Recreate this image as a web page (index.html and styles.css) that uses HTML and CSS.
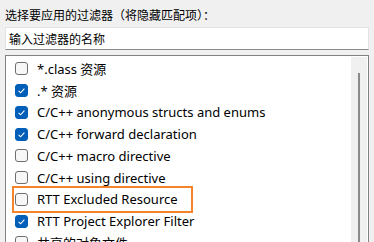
FILE: index.html
```html
<!DOCTYPE html>
<html lang="zh-CN">
<head>
<meta charset="utf-8">
<link rel="stylesheet" href="styles.css">
</head>
<body>
<div class="dialog">
  <div class="prompt">选择要应用的过滤器（将隐藏匹配项）：</div>
  <div class="search">输入过滤器的名称</div>
  <div class="list">
    <div class="rows">
      <div class="row"><span class="item"><span class="box"></span><span class="text">*.class 资源</span></span></div>
      <div class="row"><span class="item"><span class="box checked"><svg viewBox="0 0 13 13"><path d="M3.6 6.9 L5.6 8.8 L9.4 4.6"/></svg></span><span class="text">.* 资源</span></span></div>
      <div class="row"><span class="item"><span class="box checked"><svg viewBox="0 0 13 13"><path d="M3.6 6.9 L5.6 8.8 L9.4 4.6"/></svg></span><span class="text">C/C++ anonymous structs and enums</span></span></div>
      <div class="row"><span class="item"><span class="box checked"><svg viewBox="0 0 13 13"><path d="M3.6 6.9 L5.6 8.8 L9.4 4.6"/></svg></span><span class="text">C/C++ forward declaration</span></span></div>
      <div class="row"><span class="item"><span class="box"></span><span class="text">C/C++ macro directive</span></span></div>
      <div class="row"><span class="item"><span class="box"></span><span class="text">C/C++ using directive</span></span></div>
      <div class="row"><span class="item focus"><span class="box"></span><span class="text">RTT Excluded Resource</span></span></div>
      <div class="row"><span class="item"><span class="box checked"><svg viewBox="0 0 13 13"><path d="M3.6 6.9 L5.6 8.8 L9.4 4.6"/></svg></span><span class="text">RTT Project Explorer Filter</span></span></div>
      <div class="row"><span class="item"><span class="box"></span><span class="text">共享的对象文件</span></span></div>
    </div>
    <div class="scrollbar"><div class="thumb"></div></div>
  </div>
</div>
</body>
</html>
```
FILE: styles.css
```css
html, body {
  margin: 0;
  padding: 0;
  background: #f0f0f0;
  overflow: hidden;
}
body {
  width: 374px;
  height: 242px;
  font-family: "Noto Sans", "Noto Sans CJK SC", sans-serif;
  font-size: 12px;
  color: #000;
}
.dialog {
  padding: 0 5px;
  display: flex;
  flex-direction: column;
}
.prompt {
  height: 27px;
  line-height: 29px;
  white-space: nowrap;
  font-family: "Noto Sans CJK SC", sans-serif;
}
.search {
  height: 21px;
  line-height: 21px;
  background: #fff;
  border: 1px solid #e3e3e3;
  border-bottom-color: #8a8a8a;
  padding-left: 3px;
  font-family: "Noto Sans CJK SC", sans-serif;
  font-size: 12px;
}
.list {
  margin-top: 5px;
  height: 200px;
  background: #fff;
  border: 1px solid #828282;
  display: flex;
}
.rows {
  flex: 1;
  display: flex;
  flex-direction: column;
  padding-top: 2px;
}
.row {
  height: 21.75px;
  flex: none;
  display: flex;
  align-items: center;
  padding-left: 9px;
}
.item {
  display: inline-flex;
  align-items: center;
  height: 100%;
  gap: 9px;
}
.item.focus {
  outline: 2px solid #f5832a;
  outline-offset: 1px;
  padding-right: 12px;
}
.box {
  width: 13px;
  height: 13px;
  box-sizing: border-box;
  border: 1px solid #6f6f6f;
  border-radius: 3px;
  background: #f7f7f7;
  flex: none;
  display: flex;
}
.box.checked {
  background: #005fb8;
  border-color: #005fb8;
}
.box svg {
  width: 13px;
  height: 13px;
  margin: -1px;
  fill: none;
  stroke: #fff;
  stroke-width: 1.1;
}
.text {
  white-space: nowrap;
  font-size: 13px;
}
.scrollbar {
  width: 16px;
  margin: 1px 1px 0 0;
  background: #f0f0f0;
  display: flex;
  justify-content: center;
  padding-top: 16px;
}
.thumb {
  width: 2px;
  background: #8a8a8a;
  flex: none;
  height: 300px;
}
```
